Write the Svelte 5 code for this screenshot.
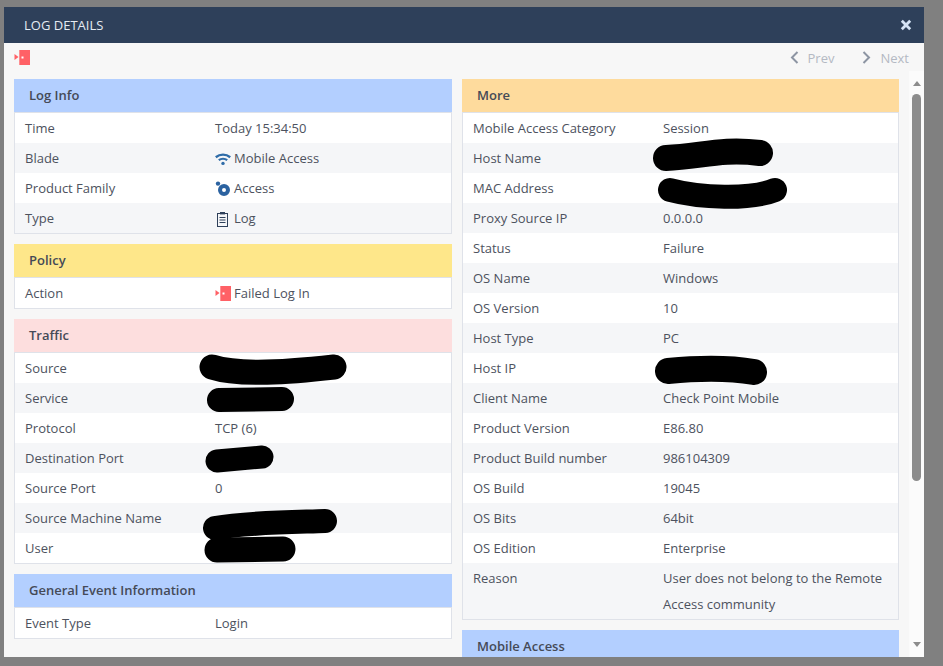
<script lang="ts">
const logInfo = [
  { label: 'Time', value: 'Today 15:34:50' },
  { label: 'Blade', value: 'Mobile Access', icon: 'wifi' },
  { label: 'Product Family', value: 'Access', icon: 'access' },
  { label: 'Type', value: 'Log', icon: 'log' }
];
const policy = [{ label: 'Action', value: 'Failed Log In', icon: 'door' }];
const traffic = [
  { label: 'Source', value: '' },
  { label: 'Service', value: '' },
  { label: 'Protocol', value: 'TCP (6)' },
  { label: 'Destination Port', value: '' },
  { label: 'Source Port', value: '0' },
  { label: 'Source Machine Name', value: '' },
  { label: 'User', value: '' }
];
const general = [{ label: 'Event Type', value: 'Login' }];
const more = [
  { label: 'Mobile Access Category', value: 'Session' },
  { label: 'Host Name', value: '' },
  { label: 'MAC Address', value: '' },
  { label: 'Proxy Source IP', value: '0.0.0.0' },
  { label: 'Status', value: 'Failure' },
  { label: 'OS Name', value: 'Windows' },
  { label: 'OS Version', value: '10' },
  { label: 'Host Type', value: 'PC' },
  { label: 'Host IP', value: '' },
  { label: 'Client Name', value: 'Check Point Mobile' },
  { label: 'Product Version', value: 'E86.80' },
  { label: 'Product Build number', value: '986104309' },
  { label: 'OS Build', value: '19045' },
  { label: 'OS Bits', value: '64bit' },
  { label: 'OS Edition', value: 'Enterprise' },
  { label: 'Reason', value: 'User does not belong to the Remote Access community' }
];
const leftSections = [
  { title: 'Log Info', tone: 'blue', rows: logInfo },
  { title: 'Policy', tone: 'yellow', rows: policy },
  { title: 'Traffic', tone: 'pink', rows: traffic },
  { title: 'General Event Information', tone: 'blue', rows: general }
];
// marker strokes over the hidden values
const scribbles = [
  { d: 'M212 367C240 376 290 372 334 367', w: 25 },
  { d: 'M219 400L282 399', w: 24 },
  { d: 'M217 461L262 457', w: 23 },
  { d: 'M215 528C250 522 300 522 325 521', w: 24 },
  { d: 'M217 550L283 549', w: 25 },
  { d: 'M666 158C700 157 720 148 760 153', w: 26 },
  { d: 'M670 190C700 198 750 200 775 190', w: 24 },
  { d: 'M668 371C700 368 730 368 754 372', w: 26 }
];
</script>

{#snippet door()}
  <svg class="door" width="17" height="15" viewBox="0 0 17 15">
    <path d="M0.5 4L4.5 7L0.5 10Z" fill="#ff6166" />
    <rect x="5.3" y="0" width="10.7" height="15" fill="#ff6166" />
    <rect x="7.5" y="6.5" width="2" height="2" fill="#fff" />
  </svg>
{/snippet}

{#snippet icon(name)}
  {#if name === 'wifi'}
    <svg width="16" height="18" viewBox="0 0 16 18" fill="none" stroke="#2f6ca8">
      <path d="M0.8 7.2C5 3.8 11 3.8 15.2 7.2" stroke-width="2.4" />
      <path d="M3.8 10.2C6.2 8.4 9.8 8.4 12.2 10.2" stroke-width="2.2" />
      <circle cx="8" cy="13.4" r="1.7" fill="#2f6ca8" stroke="none" />
    </svg>
  {:else if name === 'access'}
    <svg width="16" height="18" viewBox="0 0 16 18">
      <circle cx="9" cy="10" r="4" fill="none" stroke="#2b62a0" stroke-width="4" />
      <circle cx="3" cy="3.6" r="2.2" fill="#2b62a0" />
    </svg>
  {:else if name === 'log'}
    <svg width="16" height="18" viewBox="0 0 16 18" fill="none" stroke="#2e405a">
      <rect x="2.5" y="3.5" width="10" height="13" />
      <rect x="5" y="2" width="5" height="2.4" fill="#2e405a" stroke="none" />
      <path d="M4.5 7.5H10.5M4.5 10H10.5M4.5 12.5H10.5" />
    </svg>
  {:else if name === 'door'}
    {@render door()}
  {/if}
{/snippet}

{#snippet section(title, tone, rows)}
  <section class="section">
    <h3 class={tone}>{title}</h3>
    <div class="rows">
      {#each rows as row}
        <div class="row">
          <span class="label">{row.label}</span>
          <span class="value">
            {#if row.icon}<span class="ico" class:low={row.icon === 'door'}>{@render icon(row.icon)}</span>{/if}{row.value}
          </span>
        </div>
      {/each}
    </div>
  </section>
{/snippet}

<div class="page">
  <div class="modal">
    <header class="title">
      <span>LOG DETAILS</span>
      <svg width="12" height="12" viewBox="0 0 12 12">
        <path d="M1.8 1.8L10.2 10.2M10.2 1.8L1.8 10.2" stroke="#d5e3f5" stroke-width="2.8" />
      </svg>
    </header>
    <div class="toolbar">
      {@render door()}
      <div class="pager">
        <span class="nav">
          <svg width="9" height="13" viewBox="0 0 9 13"><path d="M7.5 1L2 6.5L7.5 12" fill="none" stroke="#8d95a3" stroke-width="2" /></svg>
          Prev
        </span>
        <span class="nav">
          <svg width="9" height="13" viewBox="0 0 9 13"><path d="M1.5 1L7 6.5L1.5 12" fill="none" stroke="#8d95a3" stroke-width="2" /></svg>
          Next
        </span>
      </div>
    </div>
    <div class="body">
      <div class="content">
        <div class="col">
          {#each leftSections as s}
            {@render section(s.title, s.tone, s.rows)}
          {/each}
        </div>
        <div class="col">
          {@render section('More', 'orange', more)}
          {@render section('Mobile Access', 'blue', [])}
        </div>
      </div>
      <div class="scrollbar">
        <span class="arrow up"></span>
        <span class="track"><span class="thumb"></span></span>
        <span class="arrow down"></span>
      </div>
    </div>
  </div>
  <svg class="scribbles" width="943" height="666" viewBox="0 0 943 666">
    {#each scribbles as s}
      <path d={s.d} fill="none" stroke="#000" stroke-width={s.w} stroke-linecap="round" />
    {/each}
  </svg>
</div>

<style>
:global(body) {
  margin: 0;
  background: #808080;
  font-family: "Open Sans", "Liberation Sans", sans-serif;
}
.page {
  position: relative;
  height: 666px;
  box-sizing: border-box;
  padding: 7px 19px 9px 4px;
  overflow: hidden;
}
.scribbles {
  position: absolute;
  left: 0;
  top: 0;
  pointer-events: none;
}
.modal {
  height: 650px;
  background: #f7f7f7;
  display: flex;
  flex-direction: column;
  overflow: hidden;
}
.title {
  flex: none;
  height: 36px;
  background: #2e405a;
  color: #e4ebf3;
  font-size: 13px;
  display: flex;
  align-items: center;
  justify-content: space-between;
  padding: 0 12px 0 20px;
}
.toolbar {
  flex: none;
  height: 28px;
  box-sizing: border-box;
  display: flex;
  align-items: center;
  justify-content: space-between;
  padding: 1px 15px 0 10px;
}
.door {
  display: block;
}
.pager {
  display: flex;
  gap: 28px;
}
.nav {
  display: flex;
  align-items: center;
  gap: 9px;
  color: #b4b9c3;
  font-size: 13px;
}
.body {
  flex: 1;
  min-height: 0;
  display: flex;
}
.content {
  flex: 1;
  min-width: 0;
  display: flex;
  gap: 10px;
  padding: 8px 10px 0;
  overflow: hidden;
}
.col {
  flex: none;
  width: 438px;
  display: flex;
  flex-direction: column;
  gap: 10px;
}
.col + .col {
  width: 437px;
}
.section {
  flex: none;
}
h3 {
  margin: 0;
  height: 33px;
  line-height: 33px;
  padding-left: 15px;
  font-size: 13px;
  font-weight: 600;
  color: #454a57;
}
.blue { background: #b3cfff; }
.yellow { background: #fee78a; }
.pink { background: #fddede; }
.orange { background: #fedb9d; }
.rows {
  background: #fff;
  border: 1px solid #dfe2e9;
  box-sizing: border-box;
}
.rows:empty {
  display: none;
}
.row {
  display: grid;
  grid-template-columns: 190px 1fr;
  padding: 2px 10px;
  font-size: 13px;
  line-height: 26px;
  color: #4d525e;
}
.row:nth-child(even) {
  background: #f5f6f8;
}
.value {
  display: block;
  min-height: 26px;
}
.ico {
  display: inline-block;
  width: 19px;
  height: 16px;
  vertical-align: -3px;
}
.ico :global(svg) {
  display: block;
}
.low {
  vertical-align: -4px;
}
.scrollbar {
  flex: none;
  width: 15px;
  background: #fbfbfb;
  display: flex;
  flex-direction: column;
  align-items: center;
  padding: 10px 0;
  box-sizing: border-box;
}
.track {
  flex: 1;
  width: 9px;
  padding-top: 8px;
}
.thumb {
  display: block;
  width: 9px;
  height: 387px;
  border-radius: 5px;
  background: #8c8c8c;
}
.arrow {
  width: 0;
  height: 0;
  border-left: 4.5px solid transparent;
  border-right: 4.5px solid transparent;
}
.up { border-bottom: 5px solid #8c8c8c; }
.down { border-top: 5px solid #8c8c8c; }
</style>
